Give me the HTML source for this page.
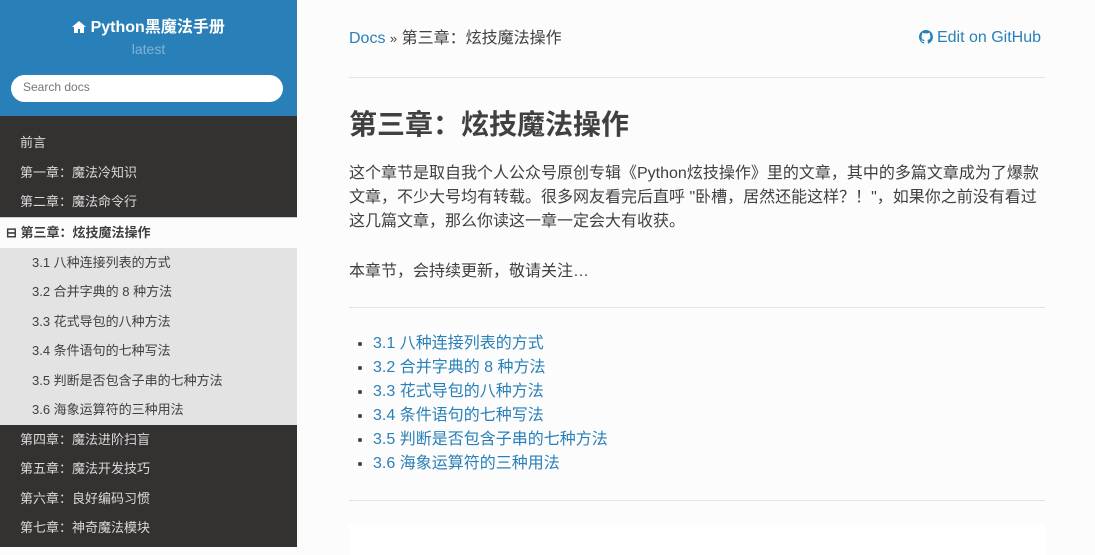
<!DOCTYPE html>
<html><head><meta charset="utf-8"><style>
body{margin:0;width:1095px;height:547px;overflow:hidden;background:#fcfcfc;font-family:"Liberation Sans","Noto Sans CJK SC",sans-serif;}
.side{position:absolute;left:0;top:0;width:297px;height:547px;background:#343131;}
.top{background:#2980b9;height:116px;text-align:center;}
.title{color:#fff;font-weight:bold;font-size:16px;padding-top:13px;height:22px;}
.ver{color:rgba(255,255,255,.4);font-size:14px;margin-top:6px;}
.search{position:absolute;left:11px;top:75px;width:272px;height:27px;background:#fff;border-radius:14px;box-sizing:border-box;padding:5px 12px;font-size:12px;color:#777;text-align:left;}
.nav{position:absolute;top:128px;left:0;width:297px;font-size:13px;}
.nav div{height:29.5px;line-height:29.5px;color:#d9d9d9;padding-left:20px;}
.nav .act{background:#fcfcfc;color:#404040;font-weight:bold;padding-left:6px;border-top:1px solid #ccc;height:30px;}
.nav .sub{background:#e3e3e3;color:#404040;padding-left:32px;}
.main{position:absolute;left:349px;width:696px;top:0;color:#404040;}
.bc{position:absolute;top:24px;font-size:16px;}
a{color:#2980b9;text-decoration:none}
hr{position:absolute;left:0;width:696px;border:0;border-top:1px solid #e1e4e5;margin:0;}
h1{position:absolute;top:103px;margin:0;font-size:28px;font-weight:bold;}
p{position:absolute;margin:0;font-size:16px;line-height:24px;}
ul{position:absolute;top:332px;margin:0;padding-left:24px;font-size:16px;line-height:24px;}
</style></head><body>
<div class="side"><div class="top"><div class="title"><svg width="14" height="12" viewBox="0 0 14 12" style="vertical-align:-1px"><path d="M7 0L0 6h2v6h4V8h2v4h4V6h2z" fill="#fff"/></svg> Python黑魔法手册</div><div class="ver">latest</div><div class="search">Search docs</div></div>
<div class="nav" style="top:128px">
<div>前言</div><div>第一章：魔法冷知识</div><div>第二章：魔法命令行</div>
<div class="act">⊟ 第三章：炫技魔法操作</div>
<div class="sub">3.1 八种连接列表的方式</div><div class="sub">3.2 合并字典的 8 种方法</div><div class="sub">3.3 花式导包的八种方法</div><div class="sub">3.4 条件语句的七种写法</div><div class="sub">3.5 判断是否包含子串的七种方法</div><div class="sub">3.6 海象运算符的三种用法</div>
<div>第四章：魔法进阶扫盲</div><div>第五章：魔法开发技巧</div><div>第六章：良好编码习惯</div><div>第七章：神奇魔法模块</div>
</div></div>
<div class="main">
<div class="bc"><a>Docs</a> <span style="font-size:13px">»</span> 第三章：炫技魔法操作</div>
<div style="position:absolute;right:4px;top:29px;font-size:16px"><a><svg width="14" height="14" viewBox="0 0 16 16" style="vertical-align:-2px"><path fill="#2980b9" d="M8 0a8 8 0 0 0-2.5 15.6c.4 0 .5-.2.5-.4v-1.5c-2.2.5-2.7-1-2.7-1-.4-.9-.9-1.2-.9-1.2-.7-.5.1-.5.1-.5.8.1 1.200.8 1.2.8.7 1.3 1.9.9 2.3.7.1-.5.3-.9.5-1.100-1.8-.2-3.6-.9-3.6-4 0-.9.3-1.6.8-2.1-.1-.2-.4-1 .1-2.1 0 0 .7-.2 2.2.8a7.6 7.6 0 0 1 4 0c1.5-1 2.2-.8 2.2-.8.4 1.1.2 1.9.1 2.1.5.6.8 1.3.8 2.1 0 3.1-1.9 3.8-3.6 4 .3.3.6.8.6 1.5v2.2c0 .2.1.5.6.4A8 8 0 0 0 8 0z"/></svg> Edit on GitHub</a></div>
<hr style="top:77px">
<h1>第三章：炫技魔法操作</h1>
<p style="top:162px">这个章节是取自我个人公众号原创专辑《Python炫技操作》里的文章，其中的多篇文章成为了爆款文章，不少大号均有转载。很多网友看完后直呼 "卧槽，居然还能这样？！"，如果你之前没有看过这几篇文章，那么你读这一章一定会大有收获。</p>
<p style="top:260px">本章节，会持续更新，敬请关注…</p>
<hr style="top:307px">
<ul><li><a>3.1 八种连接列表的方式</a></li><li><a>3.2 合并字典的 8 种方法</a></li><li><a>3.3 花式导包的八种方法</a></li><li><a>3.4 条件语句的七种写法</a></li><li><a>3.5 判断是否包含子串的七种方法</a></li><li><a>3.6 海象运算符的三种用法</a></li></ul>
<hr style="top:500px">
<div style="position:absolute;top:525px;width:696px;height:30px;background:#fff"></div>
</div>
</body></html>
